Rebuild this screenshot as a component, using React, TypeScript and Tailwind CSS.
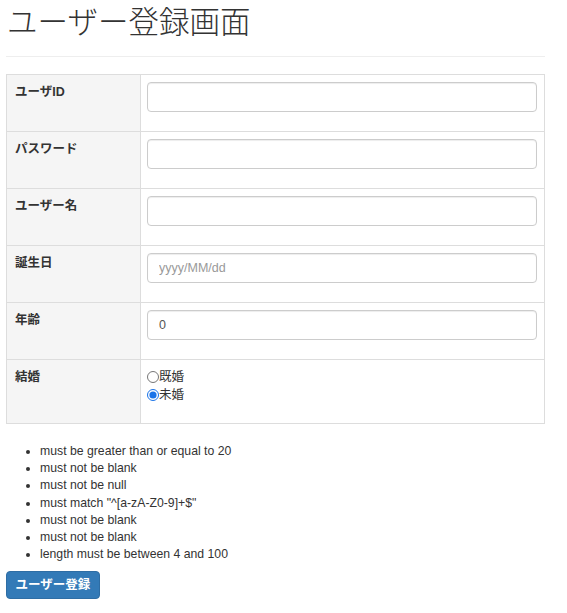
export default function App() {
  const rows: { label: string; kind: "text" | "radio"; value?: string; placeholder?: string }[] = [
    { label: "ユーザID", kind: "text" },
    { label: "パスワード", kind: "text" },
    { label: "ユーザー名", kind: "text" },
    { label: "誕生日", kind: "text", placeholder: "yyyy/MM/dd" },
    { label: "年齢", kind: "text", value: "0" },
    { label: "結婚", kind: "radio" },
  ];
  const errors = [
    "must be greater than or equal to 20",
    "must not be blank",
    "must not be null",
    'must match "^[a-zA-Z0-9]+$"',
    "must not be blank",
    "must not be blank",
    "length must be between 4 and 100",
  ];
  return (
    <div className="pl-[6px] bg-white min-h-screen text-[#333] text-[12.5px] leading-[17px] font-['Liberation_Sans','Noto_Sans_CJK_JP',sans-serif]">
      <h1 className="w-[539px] pt-[5px] pl-[1px] pb-[17px] border-b border-[#eee] text-[30.5px] leading-[34px] font-light">
        ユーザー登録画面
      </h1>
      <div className="mt-[17px] w-[539px] border border-[#ddd]">
        {rows.map((r, i) => (
          <div key={i} className={"flex " + (i > 0 ? "border-t border-[#ddd]" : "")}>
            <div className="w-[134px] shrink-0 bg-[#f5f5f5] border-r border-[#ddd] px-[8px] pt-[9px] font-bold">
              {r.label}
            </div>
            <div className="flex-1 pl-[6px] pr-[7px] pt-[7px] pb-[7px]">
              {r.kind === "text" ? (
                <input
                  type="text"
                  defaultValue={r.value}
                  placeholder={r.placeholder}
                  className="block w-full h-[30px] mb-[12px] px-[11px] border border-[#ccc] rounded-[4px] shadow-[inset_0_1px_1px_rgba(0,0,0,0.075)] text-[12.5px] text-[#555] placeholder:text-[#999] outline-none"
                />
              ) : (
                <div className="mb-[12px] pt-[1px]">
                  <label className="flex items-center h-[18px]">
                    <input type="radio" name="m" className="w-[12px] h-[12px] m-0" />
                    <span>既婚</span>
                  </label>
                  <label className="flex items-center h-[18px]">
                    <input type="radio" name="m" defaultChecked className="w-[12px] h-[12px] m-0 accent-[#1a73e8]" />
                    <span>未婚</span>
                  </label>
                </div>
              )}
            </div>
          </div>
        ))}
      </div>
      <ul className="mt-[19px] pl-[34px] list-disc text-[12.25px]">
        {errors.map((e, i) => (
          <li key={i} className="leading-[17.2px]">{e}</li>
        ))}
      </ul>
      <button className="mt-[8px] w-[94px] h-[28px] bg-[#337ab7] border border-[#2e6da4] rounded-[4px] text-white text-[12.5px] font-bold">
        ユーザー登録
      </button>
    </div>
  );
}
